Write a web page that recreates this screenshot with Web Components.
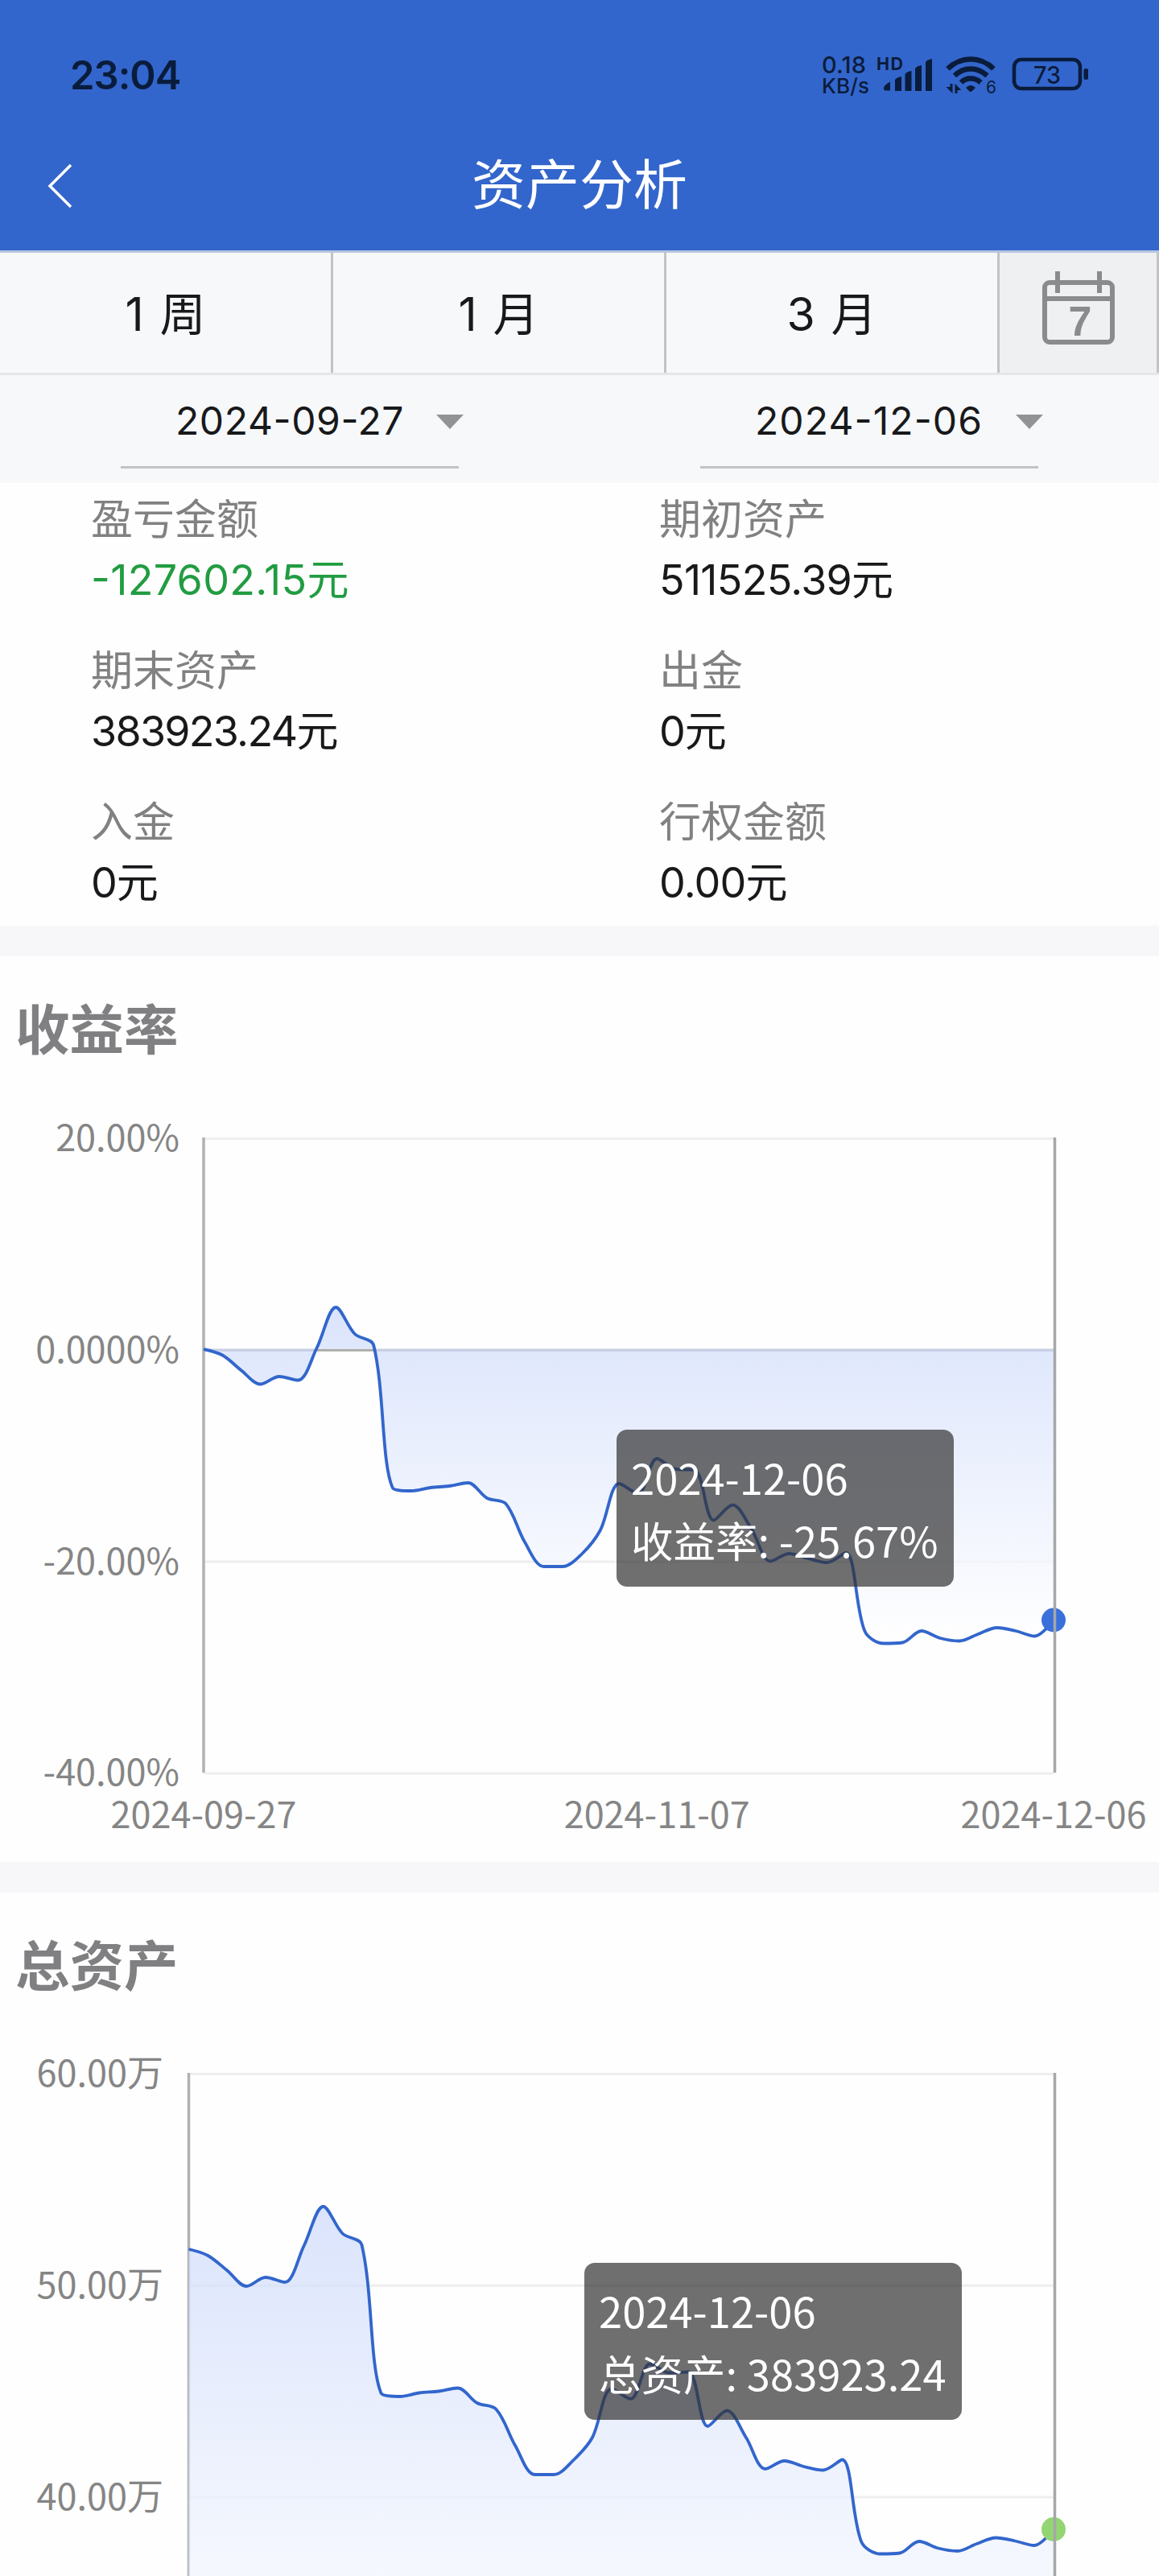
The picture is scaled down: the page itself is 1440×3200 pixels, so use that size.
<!DOCTYPE html>
<html lang="zh-CN">
<head>
<meta charset="utf-8">
<title>资产分析</title>
<style>
    body {
        margin: 0;
        width: 1440px;
        height: 3200px;
        overflow: hidden;
        background: #fefefe;
        color: #18191b;
        font-family: Inter, "Noto Sans CJK SC", sans-serif;
    }
</style>
</head>
<body>
<status-bar></status-bar>
<page-header>资产分析</page-header>
<period-tabs>
    <period-tab>1 周</period-tab>
    <period-tab>1 月</period-tab>
    <period-tab>3 月</period-tab>
</period-tabs>
<date-range>
    <date-field style="--tracking: 0.6px">2024-09-27</date-field>
    <date-field style="--tracking: 1.1px">2024-12-06</date-field>
</date-range>
<stat-grid>
    <stat-item label="盈亏金额" class="down" style="--tracking: 0.3px">-127602.15元</stat-item>
    <stat-item label="期初资产" style="--tracking: -0.7px">511525.39元</stat-item>
    <stat-item label="期末资产" style="--tracking: -1.7px">383923.24元</stat-item>
    <stat-item label="出金" style="--tracking: -1px">0元</stat-item>
    <stat-item label="入金" style="--tracking: -1px">0元</stat-item>
    <stat-item label="行权金额" style="--tracking: -0.8px">0.00元</stat-item>
</stat-grid>
<chart-section>
    <span slot="title">收益率</span>
    <line-chart id="rate"></line-chart>
    <chart-tooltip slot="tooltip" style="left: 766px; top: 588px; width: 381px">
        <span>2024-12-06</span>
        <span slot="value">收益率: -25.67%</span>
    </chart-tooltip>
</chart-section>
<chart-section>
    <span slot="title">总资产</span>
    <line-chart id="asset"></line-chart>
    <chart-tooltip slot="tooltip" style="left: 726px; top: 460px; width: 431px">
        <span>2024-12-06</span>
        <span slot="value">总资产: 383923.24</span>
    </chart-tooltip>
</chart-section>

<script>
// base class: puts the template and the styles in the shadow root
class BaseElement extends HTMLElement
{
    constructor()
    {
        super();
        this.attachShadow({ mode: 'open' });
    }
    render()
    {
        const template = document.createElement('template');
        template.innerHTML = `<style>${this.getStyles()}</style>${this.getTemplate()}`;
        this.shadowRoot.replaceChildren(template.content.cloneNode(true));
    }
    connectedCallback()
    {
        this.render();
    }
}

class StatusBar extends BaseElement
{
    getTemplate()
    {
        return `
            <time>23:04</time>
            <svg width="340" height="60" viewBox="1020 60 340 60" fill="#0a1c3c">
                <text x="1021" y="91" font-size="29" font-weight="500" textLength="55">0.18</text>
                <text x="1021" y="116" font-size="26" font-weight="500" textLength="59">KB/s</text>
                <text x="1089" y="87" font-size="21.5" font-weight="700" textLength="33">HD</text>
                <path d="M1098 109q0-3 8-7.500v11h-6q-2 0-2-3zM1112 99q2-3 8-4v18h-8zM1124.500 92q2-3 8-4v25h-8zM1137 85q2-3 8-4v32h-8zM1150 77q2-3 8-4v40h-8z"/>
                <g fill="none" stroke="#0a1c3c" stroke-width="6.500">
                    <path d="M1177.500 85.500Q1190 73.500 1206 73.500T1234.500 85.500"/>
                    <path d="M1186 94Q1195 85.500 1206 85.500T1226.500 94"/>
                    <path d="M1194 102.500Q1199 97.500 1206 97.500T1218.500 102.500"/>
                </g>
                <path d="M1200 109q6-6 12 0l-4 4q-2 2-4 0z"/>
                <path d="M1180.500 104h3v12l-8-8h5zM1186.500 116v-12l8 8h-5v4z"/>
                <text x="1225" y="116" font-size="22" textLength="13" lengthAdjust="spacingAndGlyphs">6</text>
                <rect x="1260" y="74" width="82" height="36" rx="9" fill="none" stroke="#0a1c3c" stroke-width="4.500"/>
                <rect x="1346.500" y="85" width="5.500" height="14" rx="2.500"/>
                <text x="1284" y="103.500" font-size="30" font-weight="500" textLength="34" lengthAdjust="spacingAndGlyphs">73</text>
            </svg>
        `;
    }
    getStyles()
    {
        return `
            :host {
                display: flex;
                justify-content: space-between;
                align-items: center;
                box-sizing: border-box;
                height: 150px;
                padding: 30px 80px 0 87px;
                background: #3366cc;
                color: #0a1c3c;
            }
            svg { overflow: visible; }
            time { font-size: 49px; font-weight: 600; line-height: 60px; padding-top: 8px; letter-spacing: -1px; }
        `;
    }
}
customElements.define('status-bar', StatusBar);

class PageHeader extends BaseElement
{
    getTemplate()
    {
        return `
            <svg width="36" height="60" fill="none" stroke="#fff" stroke-width="3.500"><path d="M32 4 6 30l26 26"/></svg>
            <h1><slot></slot></h1>
            <i></i>
        `;
    }
    getStyles()
    {
        return `
            :host {
                display: flex;
                align-items: center;
                height: 161px;
                padding: 0 56px;
                background: #3366cc;
                color: #fff;
                border-bottom: 3px solid #b7c5de;
            }
            h1 { flex: 1; margin: 0; font-size: 67px; font-weight: 400; line-height: 100px; text-align: center; padding-bottom: 1px; }
            i { width: 36px; }
        `;
    }
}
customElements.define('page-header', PageHeader);

class PeriodTabs extends BaseElement
{
    getTemplate()
    {
        return `
            <slot></slot>
            <div class="calendar">
                <svg width="90" height="91" viewBox="0 0 90 91" fill="none" stroke="#8a8b8c" stroke-width="6">
                    <rect x="3" y="14" width="84" height="74" rx="6"/>
                    <path d="M3 34h84M19 0v27M71 0v27"/>
                    <text x="47" y="80" text-anchor="middle" font-family="Liberation Sans, sans-serif" font-size="52" font-weight="700" fill="#8a8b8c" stroke="none">7</text>
                </svg>
            </div>
        `;
    }
    getStyles()
    {
        return `
            :host {
                display: flex;
                height: 149px;
                background: #f7f8fa;
                border-bottom: 3px solid #e5e6e8;
            }
            .calendar {
                flex: 1;
                display: flex;
                align-items: center;
                justify-content: center;
                background: #eff0f2;
                border-right: 3px solid #c2c3c6;
                padding-bottom: 12px;
            }
        `;
    }
}
customElements.define('period-tabs', PeriodTabs);

class PeriodTab extends BaseElement
{
    getTemplate()
    {
        return `<div><slot></slot></div>`;
    }
    getStyles()
    {
        return `
            :host {
                display: flex;
                align-items: center;
                justify-content: center;
                width: 411px;
                border-right: 3px solid #c2c3c6;
                font-size: 57px;
                word-spacing: 4px;
            }
            div { line-height: 80px; padding-top: 5px; }
        `;
    }
}
customElements.define('period-tab', PeriodTab);

class DateRange extends BaseElement
{
    getTemplate()
    {
        return `<slot></slot>`;
    }
    getStyles()
    {
        return `
            :host {
                display: flex;
                gap: 300px;
                height: 134px;
                padding-left: 150px;
                background: #f7f8fa;
            }
        `;
    }
}
customElements.define('date-range', DateRange);

class DateField extends BaseElement
{
    getTemplate()
    {
        return `
            <span><slot></slot></span>
            <svg width="36" height="20"><path d="M1 1h34L18 19z" fill="#929394"/></svg>
        `;
    }
    getStyles()
    {
        return `
            :host {
                display: flex;
                align-items: center;
                box-sizing: border-box;
                width: 420px;
                height: 116px;
                padding-left: 68px;
                border-bottom: 3px solid #c2c3c6;
                font-size: 48px;
                font-feature-settings: "case";
            }
            span { flex: none; width: 323px; white-space: nowrap; letter-spacing: var(--tracking, 0); }
            svg { flex: none; padding-top: 3px; }
        `;
    }
}
customElements.define('date-field', DateField);

class StatGrid extends BaseElement
{
    getTemplate()
    {
        return `<slot></slot>`;
    }
    getStyles()
    {
        return `
            :host {
                display: grid;
                grid-template-columns: 706px 1fr;
                row-gap: 38px;
                padding: 8px 0 16px 113px;
            }
        `;
    }
}
customElements.define('stat-grid', StatGrid);

class StatItem extends BaseElement
{
    getTemplate()
    {
        return `
            <div class="label">${this.getAttribute('label')}</div>
            <div class="value"><slot></slot></div>
        `;
    }
    getStyles()
    {
        return `
            :host { display: block; font-size: 52px; }
            div { height: 75px; line-height: 75px; white-space: nowrap; }
            .label { color: #818181; }
            .value { letter-spacing: var(--tracking, -0.5px); font-feature-settings: "case"; }
            :host(.down) .value { color: #229c41; }
        `;
    }
}
customElements.define('stat-item', StatItem);

class ChartSection extends BaseElement
{
    getTemplate()
    {
        return `
            <h2><slot name="title"></slot></h2>
            <slot></slot>
            <slot name="tooltip"></slot>
        `;
    }
    getStyles()
    {
        return `
            :host {
                display: block;
                position: relative;
                border-top: 38px solid #f7f7f9;
                font-family: "Noto Sans CJK SC", sans-serif;
            }
            h2 {
                height: 121px;
                margin: 0;
                padding: 28px 0 0 19px;
                color: #808083;
                font-size: 67.500px;
                line-height: 118px;
            }
        `;
    }
}
customElements.define('chart-section', ChartSection);

class ChartTooltip extends BaseElement
{
    getTemplate()
    {
        return `<div><slot></slot></div><div><slot name="value"></slot></div>`;
    }
    getStyles()
    {
        return `
            :host {
                position: absolute;
                padding: 19px 20px 20px 18px;
                border-radius: 13px;
                background: rgba(50, 50, 50, 0.7);
                color: #fff;
                font-size: 52.500px;
            }
            div { height: 78px; line-height: 78px; white-space: nowrap; }
        `;
    }
}
customElements.define('chart-tooltip', ChartTooltip);

// points are heights measured from the top of the plot
const charts = {
    rate: {
        left: 253, labelRight: 223, top: 77, base: 261.5, height: 976, dot: '#3a70dc',
        labels: ['20.00%', '0.0000%', '-20.00%', '-40.00%'],
        points: [262, 269.5, 288.5, 305.5, 296, 300.5, 260, 210, 243, 257, 434, 438, 434, 432, 428, 447,
            454, 501.5, 532, 532, 517, 487, 429, 441.5, 398, 411, 412, 474.5, 455.5, 485, 525.5, 516,
            522, 527, 515, 612, 627.5, 626.5, 612, 621, 624.5, 616, 608, 612, 618.5, 598.5]
    },
    asset: {
        left: 234.5, labelRight: 203, top: 76, base: 789, height: 700, dot: '#93d572',
        labels: ['60.00万', '50.00万', '40.00万'],
        points: [218, 226, 244.5, 264, 253, 259, 213.5, 165, 198.5, 212.5, 396.5, 401, 396.5, 394.5, 390.5, 409,
            417, 462.5, 498, 498, 480.5, 452, 391.5, 404, 360.5, 371.5, 370.5, 438, 418.5, 452, 491, 481,
            488, 492.5, 479.5, 581.5, 596.5, 595.5, 581, 589.5, 593, 584, 576.5, 580.5, 586, 566]
    }
};

class LineChart extends BaseElement
{
    // smooth curve whose control points stay between neighbouring points
    getCurve(pts)
    {
        const smooth = 0.33;
        const clamp = (v, a, b) => Math.max(Math.min(a, b), Math.min(Math.max(a, b), v));
        let d = `M${pts[0]}`;
        let cp = pts[0];
        for (let i = 1; i < pts.length; i++) {
            const [px, py] = pts[i - 1];
            const [x, y] = pts[i];
            let before = [x, y];
            let after = [x, y];
            if (i < pts.length - 1) {
                const [nx, ny] = pts[i + 1];
                const lenPrev = Math.hypot(x - px, y - py);
                const lenNext = Math.hypot(nx - x, ny - y);
                const ratio = lenNext / (lenNext + lenPrev);
                after = [
                    clamp(x + (nx - px) * smooth * ratio, x, nx),
                    clamp(y + (ny - py) * smooth * ratio, y, ny)
                ];
                before = [
                    clamp(x - (after[0] - x) * lenPrev / lenNext, px, x),
                    clamp(y - (after[1] - y) * lenPrev / lenNext, py, y)
                ];
                after = [
                    x + (x - before[0]) * lenNext / lenPrev,
                    y + (y - before[1]) * lenNext / lenPrev
                ];
            }
            d += `C${cp} ${before} ${x},${y}`;
            cp = after;
        }
        return d;
    }
    getTemplate()
    {
        const { left, labelRight, top, base, height, dot, labels, points } = charts[this.id];
        const right = 1309;
        const bottom = top + 788;
        const step = (right - left) / (points.length - 1);
        const pts = points.map((p, i) => [left + i * step, top + p]);
        const curve = this.getCurve(pts);
        const grid = labels.map((label, i) => {
            const y = top + 0.5 + i * 262.8;
            const zero = label === '0.0000%';
            return `
                <path d="M${left} ${y}H${right}" stroke="${zero ? '#aaa' : '#eeeeef'}" stroke-width="3"/>
                <text x="${labelRight}" y="${y + 15.5}" text-anchor="end">${label}</text>
            `;
        }).join('');
        const dates = `
            <g text-anchor="middle">
                <text x="${left}" y="${bottom + 68.5}">2024-09-27</text>
                <text x="${left + step * 24}" y="${bottom + 68.5}">2024-11-07</text>
                <text x="${right}" y="${bottom + 68.5}">2024-12-06</text>
            </g>
        `;
        return `
            <svg width="1440" height="${height}" fill="none">
                <defs>
                    <linearGradient id="fill" x1="0" y1="0" x2="0" y2="1">
                        <stop offset="0" stop-color="#ccd9fb"/>
                        <stop offset="1" stop-color="#fff"/>
                    </linearGradient>
                </defs>
                ${grid}
                <path d="M${left} ${top - 1}V${bottom}" stroke="#b0b1b1" stroke-width="3.500"/>
                <path d="${curve}V${top + base}H${left}Z" fill="url(#fill)" fill-opacity="0.7"/>
                <path d="${curve}" stroke="#3266cc" stroke-width="3.800" stroke-linejoin="round"/>
                <circle cx="${right}" cy="${pts[pts.length - 1][1]}" r="15" fill="${dot}"/>
                <path d="M${right + 1.5} ${top - 1}V${bottom}" stroke="#a6a7a8" stroke-width="3.500"/>
                ${bottom < height ? dates : ''}
            </svg>
        `;
    }
    getStyles()
    {
        return `
            :host { display: block; }
            svg { display: block; }
            text { fill: #858585; font-size: 45px; }
        `;
    }
}
customElements.define('line-chart', LineChart);
</script>
</body>
</html>
